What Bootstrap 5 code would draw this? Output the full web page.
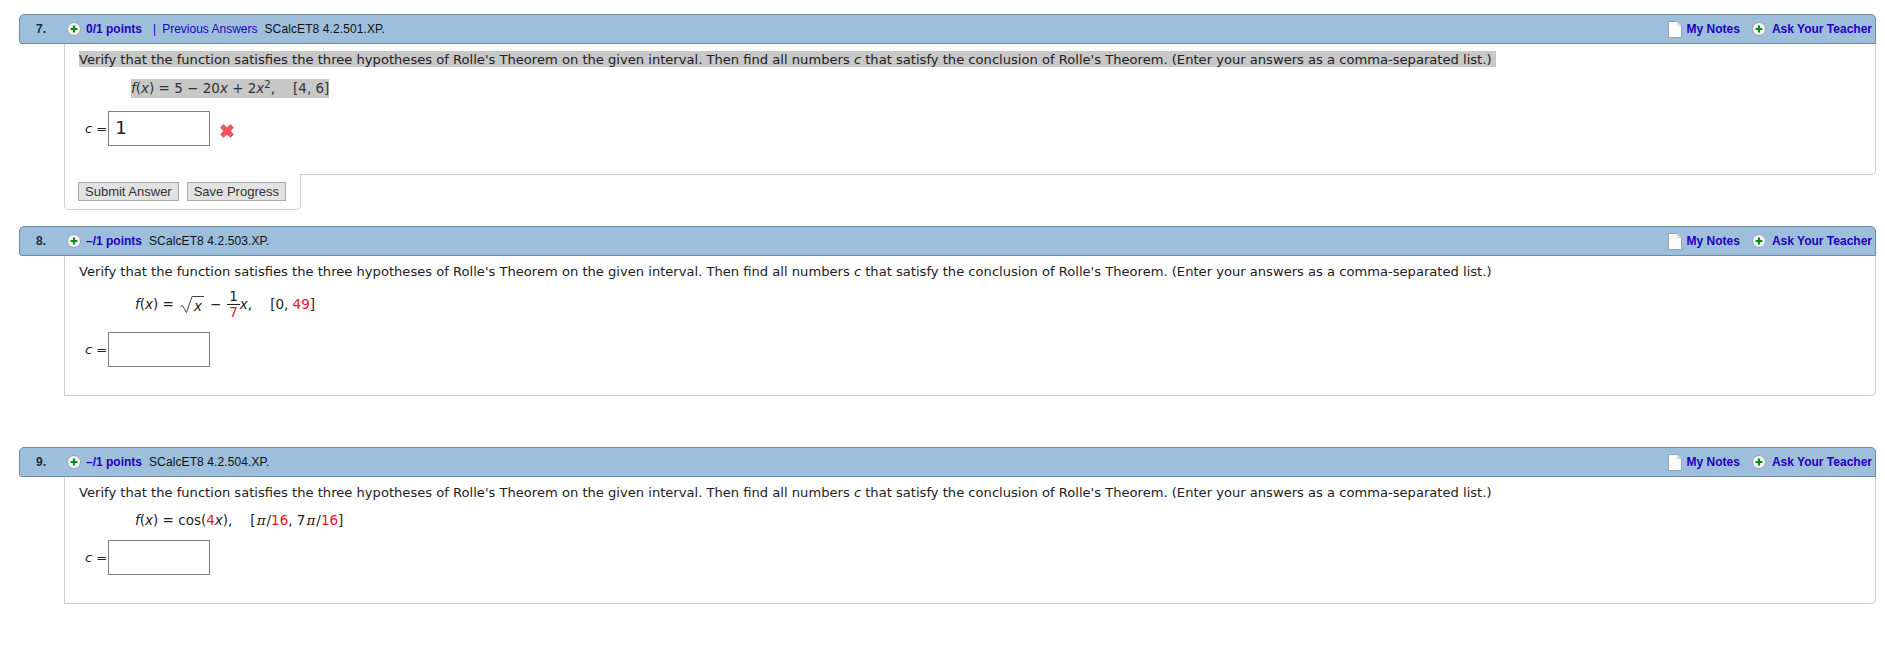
<!DOCTYPE html>
<html lang="en">
<head>
  <meta charset="UTF-8" />
  <meta name="viewport" content="width=device-width, initial-scale=1.0" />
  <title>Rolle's Theorem</title>
  <link href="https://cdn.jsdelivr.net/npm/bootstrap@5.3.3/dist/css/bootstrap.min.css" rel="stylesheet" />
  <style>
    body { background: #fff; font-family: "Liberation Sans", Arial, sans-serif; font-size: 12px; color: #222; }
    .q-page { padding: 14px 9px 0 19px; }
    .q-head { height: 30px; background: #9dbfdc; border: 1px solid #6d8ba6; border-radius: 5px 5px 0 3px; padding: 0 3px 0 16px; }
    .q-num { width: 31px; font-weight: 700; color: #1c2a38; }
    .q-head a { color: #2200c1; text-decoration: none; }
    .q-sep { margin: 0 6px 0 11px; color: #2200c1; }
    .q-code { margin-left: 7px; color: #111; letter-spacing: .1px; }
    .q-icon { width: 14px; height: 14px; margin-right: 5px; flex: none; }
    .q-right .q-icon { margin: 0 6px 0 12px; }
    .q-note { width: 14px; height: 17px; margin-right: 5px; flex: none; }
    .q-body { margin-left: 45px; border: 1px solid #ccc; border-top: 0; border-radius: 0 0 5px 0; padding: 7px 0 28px 14px; font-family: "DejaVu Sans", Verdana, sans-serif; font-size: 13.1px; color: #222; }
    .q-text { height: 16px; line-height: 17px; }
    .q-hl { background: #c8c8c8; display: inline-block; height: 16px; }
    .q-formula { margin-left: 56px; white-space: nowrap; line-height: 19px; height: 19px; font-size: 13.5px; }
    .q-formula.q-mark { display: table; margin-left: 52px; background: #c8c8c8; color: #333; }
    .q-formula sup { font-size: 75%; line-height: 0; }
    .q-int { margin-left: 18px; }
    .q-red { color: #e8102a; }
    .q-pi { font-family: "DejaVu Serif", serif; font-style: italic; margin: 0 1px; }
    .q-answer { margin-left: 6px; }
    .q-label { margin-right: 1px; white-space: nowrap; }
    .q-input { width: 102px; height: 35px; border: 1px solid #808080; border-radius: 0; padding: 0 0 3px 6px; font-family: "DejaVu Sans", Verdana, sans-serif; font-size: 18px; color: #222; line-height: 1; }
    .q-x { width: 16px; height: 16px; margin: 5px 0 0 9px; }
    .q-tab { margin: -1px 0 16px 45px; width: 237px; height: 36px; background: #fff; border: 1px solid #ccc; border-top: 0; border-radius: 0 0 5px 5px; padding: 8px 0 0 13px; }
    .q-btn { height: 19px; padding: 0 6px; border: 1px solid #aaa; border-radius: 0; background: #e2e2e2; color: #333; font-size: 13px; line-height: 17px; font-family: "Liberation Sans", Arial, sans-serif; }
    .q-btn + .q-btn { margin-left: 8px; }
    .q-f8 { height: 31px; line-height: 31px; }
    .q-surd { width: 13px; height: 18px; margin-left: 6px; flex: none; }
    .q-root { border-top: 1px solid #444; height: 18px; line-height: 18px; padding: 0 2px 0 1px; font-style: italic; }
    .q-minus { margin: 0 6px; }
    .q-frac { display: inline-flex; flex-direction: column; align-items: center; line-height: 15px; }
    .q-frac span:first-child { border-bottom: 1px solid #222; padding: 0 2px; }
    .q-last { margin-bottom: 51px; }
    .q-t7 { margin-top: 12px; }
    .q-a7 { margin-top: 13px; }
    .q-t8 { margin-top: 10px; }
    .q-a8 { margin-top: 12px; }
    .q-t9 { margin-top: 11px; }
    .q-a9 { margin-top: 10px; }
  </style>
</head>
<body>
  <svg width="0" height="0" class="position-absolute">
    <defs>
      <symbol id="ic-plus" viewBox="0 0 14 14">
        <circle cx="7" cy="7" r="6.5" fill="#f4f4f4" stroke="#9aa3aa" stroke-width="1" />
        <path d="M7 3.6v6.8M3.6 7h6.8" stroke="#0a8a1e" stroke-width="2.2" />
      </symbol>
      <symbol id="ic-note" viewBox="0 0 14 17">
        <path d="M.5.5H9.5L13.5 4.5V16.5H.5Z" fill="#fbfbfb" stroke="#8fa5b8" />
        <path d="M9.5.5V4.5H13.5" fill="#e4e4e4" stroke="#d0d0d0" />
      </symbol>
    </defs>
  </svg>

  <div class="q-page">
    <!-- 7 -->
    <div class="q-head d-flex align-items-center">
      <span class="q-num">7.</span>
      <svg class="q-icon"><use href="#ic-plus" /></svg>
      <a href="#" class="fw-bold">0/1 points</a>
      <span class="q-sep">|</span>
      <a href="#">Previous Answers</a>
      <span class="q-code">SCalcET8 4.2.501.XP.</span>
      <div class="q-right ms-auto d-flex align-items-center">
        <svg class="q-note"><use href="#ic-note" /></svg>
        <a href="#" class="fw-bold">My Notes</a>
        <svg class="q-icon"><use href="#ic-plus" /></svg>
        <a href="#" class="fw-bold">Ask Your Teacher</a>
      </div>
    </div>
    <div class="q-body">
      <div class="q-text"><span class="q-hl">Verify that the function satisfies the three hypotheses of Rolle's Theorem on the given interval. Then find all numbers <i>c</i> that satisfy the conclusion of Rolle's Theorem. (Enter your answers as a comma-separated list.)&nbsp;</span></div>
      <div class="q-formula q-mark q-t7"><i>f</i>(<i>x</i>) = 5 − 20<i>x</i> + 2<i>x</i><sup>2</sup>,<span class="q-int">[4, 6]</span></div>
      <div class="q-answer d-flex align-items-center q-a7">
        <span class="q-label"><i>c</i> =</span>
        <input class="form-control q-input" type="text" value="1" />
        <svg class="q-x" viewBox="0 0 14 14"><path d="M2 4L4 2L7 5L10 2L12 4L9 7L12 10L10 12L7 9L4 12L2 10L5 7Z" fill="#f4525e" stroke="#f4525e" stroke-width="1.6" stroke-linejoin="round" /></svg>
      </div>
    </div>
    <div class="q-tab">
      <button class="btn q-btn" type="button">Submit Answer</button><button class="btn q-btn" type="button">Save Progress</button>
    </div>

    <!-- 8 -->
    <div class="q-head d-flex align-items-center">
      <span class="q-num">8.</span>
      <svg class="q-icon"><use href="#ic-plus" /></svg>
      <a href="#" class="fw-bold">–/1 points</a>
      <span class="q-code">SCalcET8 4.2.503.XP.</span>
      <div class="q-right ms-auto d-flex align-items-center">
        <svg class="q-note"><use href="#ic-note" /></svg>
        <a href="#" class="fw-bold">My Notes</a>
        <svg class="q-icon"><use href="#ic-plus" /></svg>
        <a href="#" class="fw-bold">Ask Your Teacher</a>
      </div>
    </div>
    <div class="q-body q-last">
      <div class="q-text">Verify that the function satisfies the three hypotheses of Rolle's Theorem on the given interval. Then find all numbers <i>c</i> that satisfy the conclusion of Rolle's Theorem. (Enter your answers as a comma-separated list.)</div>
      <div class="q-formula q-f8 d-flex align-items-center q-t8"><span><i>f</i>(<i>x</i>) =</span><svg class="q-surd" viewBox="0 0 13 18"><path d="M.5 10.5L2.5 9.5L6.5 16.5L12 .5H13" fill="none" stroke="#444" /></svg><span class="q-root">x</span><span class="q-minus">−</span><span class="q-frac"><span>1</span><span class="q-red">7</span></span><span><i>x</i>,</span><span class="q-int">[0, <span class="q-red">49</span>]</span></div>
      <div class="q-answer d-flex align-items-center q-a8">
        <span class="q-label"><i>c</i> =</span>
        <input class="form-control q-input" type="text" />
      </div>
    </div>

    <!-- 9 -->
    <div class="q-head d-flex align-items-center">
      <span class="q-num">9.</span>
      <svg class="q-icon"><use href="#ic-plus" /></svg>
      <a href="#" class="fw-bold">–/1 points</a>
      <span class="q-code">SCalcET8 4.2.504.XP.</span>
      <div class="q-right ms-auto d-flex align-items-center">
        <svg class="q-note"><use href="#ic-note" /></svg>
        <a href="#" class="fw-bold">My Notes</a>
        <svg class="q-icon"><use href="#ic-plus" /></svg>
        <a href="#" class="fw-bold">Ask Your Teacher</a>
      </div>
    </div>
    <div class="q-body">
      <div class="q-text">Verify that the function satisfies the three hypotheses of Rolle's Theorem on the given interval. Then find all numbers <i>c</i> that satisfy the conclusion of Rolle's Theorem. (Enter your answers as a comma-separated list.)</div>
      <div class="q-formula q-t9"><i>f</i>(<i>x</i>) = cos(<span class="q-red">4</span><i>x</i>),<span class="q-int">[<span class="q-pi">π</span>/<span class="q-red">16</span>, 7<span class="q-pi">π</span>/<span class="q-red">16</span>]</span></div>
      <div class="q-answer d-flex align-items-center q-a9">
        <span class="q-label"><i>c</i> =</span>
        <input class="form-control q-input" type="text" />
      </div>
    </div>
  </div>
  <script src="https://cdn.jsdelivr.net/npm/bootstrap@5.3.3/dist/js/bootstrap.bundle.min.js"></script>
</body>
</html>
